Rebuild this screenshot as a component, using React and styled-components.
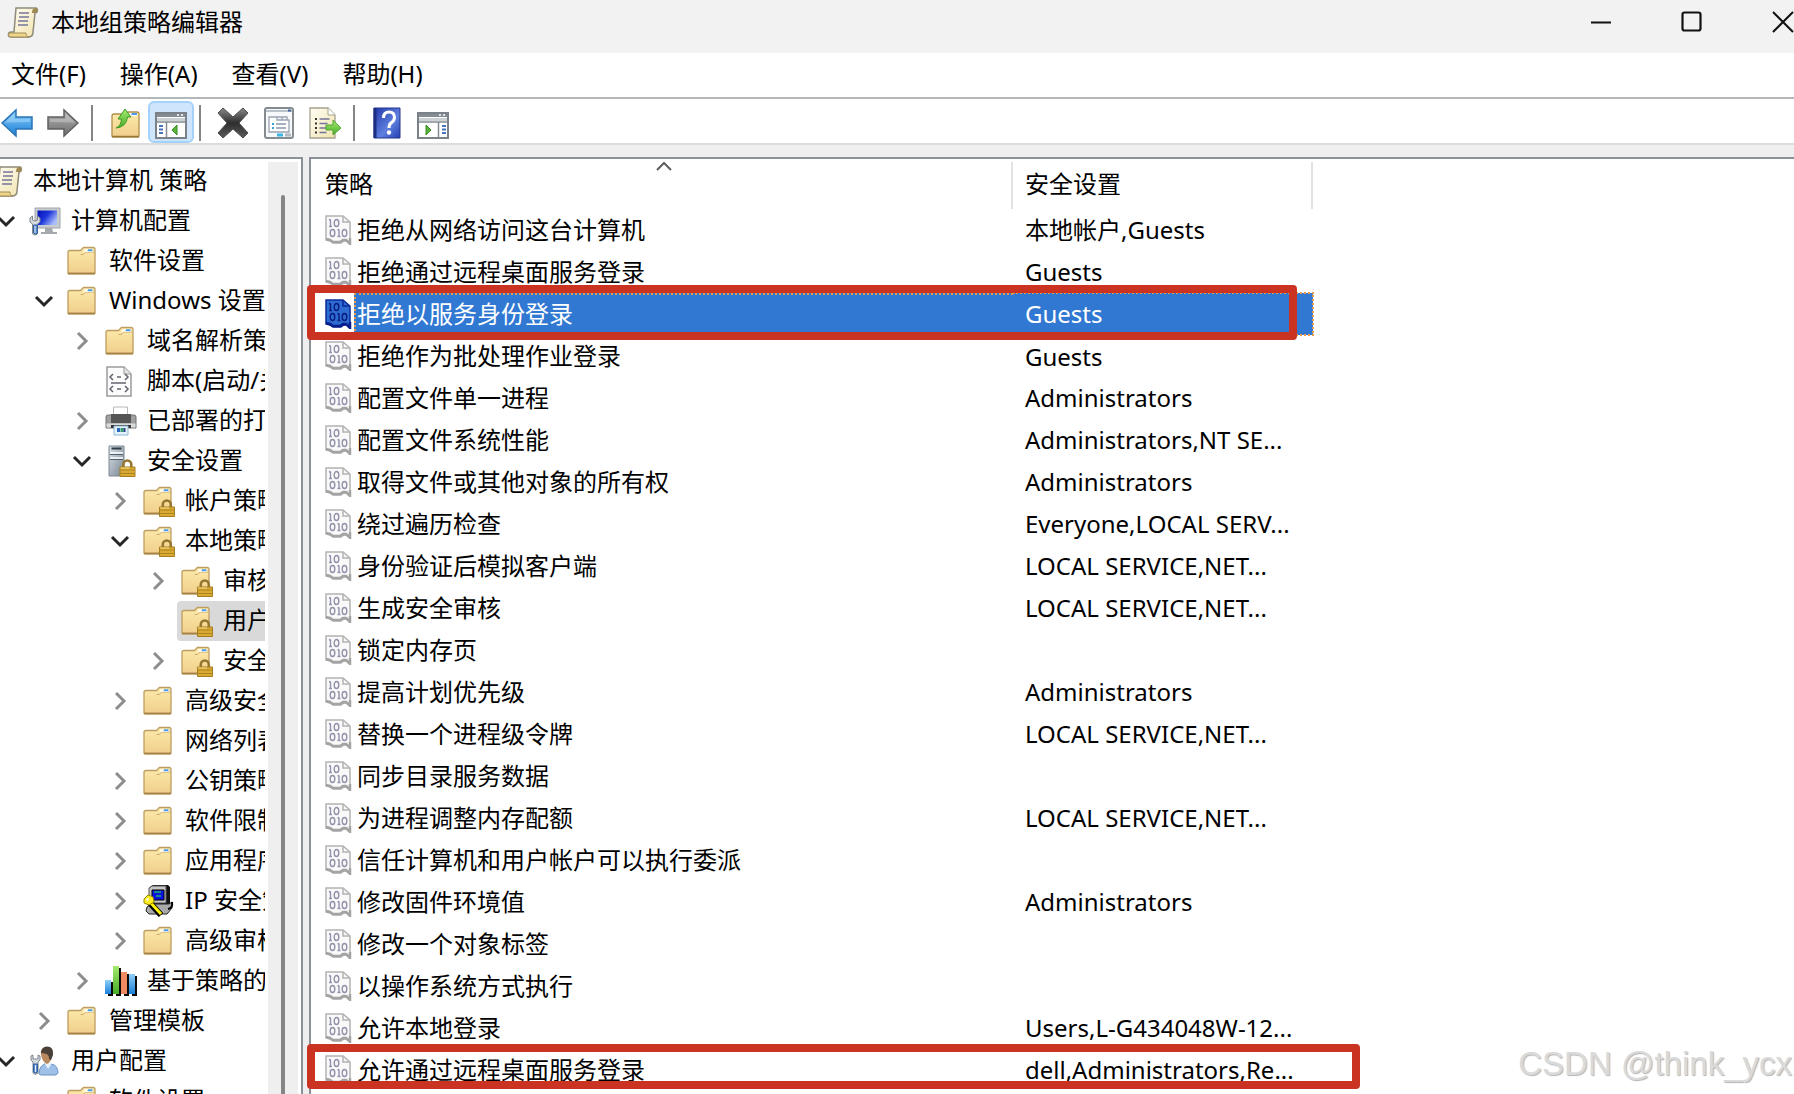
import { useState } from "react";
import styled, { createGlobalStyle, css } from "styled-components";

const GlobalStyle = createGlobalStyle`
  * {
    box-sizing: border-box;
  }
  body {
    margin: 0;
    background-color: #fff;
    color: #000;
    font-family: "Noto Sans", "Noto Sans CJK SC", sans-serif;
    font-size: 24px;
    line-height: 32px;
  }
  button {
    padding: 0;
    border: 0;
    background: none;
    color: inherit;
    font: inherit;
    text-align: left;
  }
`;

const Window = styled.div`
  position: relative;
  display: flex;
  flex-direction: column;
  height: 100vh;
  overflow: hidden;
`;

const TitleBar = styled.header`
  display: flex;
  align-items: center;
  justify-content: space-between;
  height: 53px;
  padding: 0 0 10px 7px;
  background-color: #f3f2f2;
`;

const Title = styled.h1`
  display: flex;
  align-items: center;
  gap: 12px;
  margin: 0;
  font-size: 24px;
  font-weight: 400;
`;

const WindowControls = styled.div`
  display: flex;
  margin-right: -34px;
`;

const ControlButton = styled.button`
  display: flex;
  align-items: center;
  justify-content: center;
  width: 91px;
  height: 42px;
`;

const MenuBar = styled.nav`
  display: flex;
  align-items: center;
  gap: 34px;
  height: 46px;
  padding: 0 0 2px 11px;
  border-bottom: 2px solid #b4b7ba;
`;

const ToolBar = styled.div`
  display: flex;
  align-items: flex-end;
  height: 46px;
  margin-left: -6px;
  border-bottom: 2px solid #dcdcdc;
`;

const ToolButton = styled.button`
  display: flex;
  align-items: center;
  justify-content: center;
  width: 46px;
  height: 42px;
  padding-top: 2px;
  border: 2px solid transparent;
  border-radius: 6px;
  ${({ $active }) =>
    $active &&
    css`
      border-color: #a5d2fb;
      background-color: #cfe5fb;
    `}
`;

const ToolDivider = styled.span`
  width: 2px;
  height: 36px;
  margin: 0 9px 2px 5px;
  background-color: #858585;
`;

const Main = styled.main`
  display: flex;
  flex: 1;
  gap: 6px;
  min-height: 0;
  padding-top: 12px;
  background-color: #efefef;
`;

const TreePane = styled.aside`
  display: flex;
  flex: none;
  gap: 3px;
  width: 303px;
  padding: 2px 3px 0 0;
  border: solid #8b9199;
  border-width: 2px 2px 0 0;
  background-color: #fff;
`;

const TreeClip = styled.div`
  flex: 1;
  overflow: hidden;
`;

const Tree = styled.ul`
  margin: 0 0 0 -42px;
  padding: 0;
  list-style: none;
`;

const TreeItem = styled.li`
  display: flex;
  align-items: center;
  height: 40px;
  padding-left: ${({ $level }) => $level * 38}px;
  white-space: nowrap;
`;

const Twisty = styled.button`
  display: flex;
  flex: none;
  align-items: center;
  justify-content: center;
  width: 20px;
  height: 40px;
  margin-right: 9px;
`;

const TwistySpace = styled.span`
  flex: none;
  width: 20px;
  margin-right: 9px;
`;

const NodeButton = styled.button`
  display: flex;
  flex: 1 0 auto;
  align-items: center;
  gap: 10px;
  height: 40px;
  padding-left: 4px;
  border-radius: 4px;
  background-color: ${({ $selected }) => ($selected ? "#d9d9d9" : "transparent")};
`;

const NodeLabel = styled.span`
  padding-bottom: 2px;
`;

const ScrollTrack = styled.div`
  display: flex;
  justify-content: center;
  width: 30px;
  margin-top: 1px;
  padding-top: 33px;
  background-color: #efefef;
`;

const ScrollThumb = styled.div`
  width: 4px;
  border-radius: 2px 2px 0 0;
  background-color: #858585;
`;

const ListPane = styled.section`
  flex: 1;
  min-width: 0;
  border: solid #8b9199;
  border-width: 2px 0 0 2px;
  background-color: #fff;
`;

const PolicyTable = styled.table`
  width: 100%;
  border-collapse: collapse;
  table-layout: fixed;
`;

const HeadCell = styled.th`
  position: relative;
  width: ${({ $width }) => $width};
  height: 50px;
  padding: 0 0 0 ${({ $indent }) => $indent};
  font-weight: 400;
  text-align: left;
  background: linear-gradient(#e2e2e2, #e2e2e2) right 3px / 2px 47px no-repeat;
`;

const SortMark = styled.svg`
  position: absolute;
  top: 2px;
  left: 50%;
  margin-left: -6px;
`;

const PolicyRow = styled.tr`
  height: 42px;
  white-space: nowrap;
`;

const NameCell = styled.td`
  position: relative;
  padding: 0;
`;

const NameContent = styled.div`
  display: flex;
  align-items: center;
  height: 42px;
  padding-left: 14px;
`;

const focusDots = "2px dotted #e39a4c";

const PolicyName = styled.span`
  flex: 1;
  height: 42px;
  margin-left: 2px;
  padding-left: 3px;
  line-height: 42px;
  ${({ $selected }) =>
    $selected &&
    css`
      padding-left: 1px;
      border: ${focusDots};
      border-right: 0;
      background-color: #3078d2;
      color: #fff;
      line-height: 38px;
    `}
`;

const SettingCell = styled.td`
  padding: 0 0 0 12px;
  ${({ $selected }) =>
    $selected &&
    css`
      border: ${focusDots};
      border-left: 0;
      background-color: #3078d2;
      color: #fff;
    `}
`;

const Highlight = styled.span`
  position: absolute;
  top: ${({ $top }) => $top}px;
  left: -4px;
  z-index: 1;
  width: ${({ $width }) => $width}px;
  height: ${({ $height }) => $height}px;
  border: 8px solid #ca3222;
  border-radius: 4px;
  pointer-events: none;
`;

const Watermark = styled.span`
  position: absolute;
  right: 2px;
  bottom: 12px;
  color: #dadada;
  font-family: "Liberation Sans", sans-serif;
  font-size: 33px;
  line-height: 36px;
  text-shadow: 1px 1px 1px #b4b4b4;
`;

/* icons */

const Gradients = () => (
  <svg width="0" height="0" style={{ position: "absolute" }} aria-hidden="true">
    <defs>
      <linearGradient id="folder" x1="0" y1="0" x2="0" y2="1">
        <stop offset="0" stopColor="#fdeaac" />
        <stop offset="1" stopColor="#f0ce8a" />
      </linearGradient>
      <linearGradient id="blue" x1="0" y1="0" x2="0" y2="1">
        <stop offset="0" stopColor="#8fd0fa" />
        <stop offset="1" stopColor="#1a7fd8" />
      </linearGradient>
      <linearGradient id="gray" x1="0" y1="0" x2="0" y2="1">
        <stop offset="0" stopColor="#b5b5b5" />
        <stop offset="1" stopColor="#6c6c6c" />
      </linearGradient>
      <linearGradient id="dark" x1="0" y1="0" x2="0" y2="1">
        <stop offset="0" stopColor="#8a8a8a" />
        <stop offset="0.5" stopColor="#2e2e2e" />
        <stop offset="1" stopColor="#5c5c5c" />
      </linearGradient>
      <linearGradient id="paper" x1="0" y1="0" x2="1" y2="1">
        <stop offset="0" stopColor="#fffef5" />
        <stop offset="1" stopColor="#f1e3ae" />
      </linearGradient>
      <linearGradient id="screen" x1="0" y1="0" x2="1" y2="0.6">
        <stop offset="0" stopColor="#0611b4" />
        <stop offset="0.5" stopColor="#1c34dc" />
        <stop offset="1" stopColor="#a9bdf8" />
      </linearGradient>
      <linearGradient id="help" x1="0" y1="0" x2="1" y2="1">
        <stop offset="0" stopColor="#2338a8" />
        <stop offset="0.6" stopColor="#5f80e0" />
        <stop offset="1" stopColor="#2340b0" />
      </linearGradient>
      <linearGradient id="steel" x1="0" y1="0" x2="1" y2="1">
        <stop offset="0" stopColor="#dbe3ea" />
        <stop offset="1" stopColor="#76838f" />
      </linearGradient>
      <linearGradient id="green" x1="0" y1="0" x2="0" y2="1">
        <stop offset="0" stopColor="#a5ea70" />
        <stop offset="1" stopColor="#47ad28" />
      </linearGradient>
    </defs>
  </svg>
);

const Icon = ({ size = 32, children }) => (
  <svg width={size} height={size} viewBox="0 0 32 32" fill="none" aria-hidden="true">
    {children}
  </svg>
);

const ScrollIcon = () => (
  <Icon>
    <path d="M9 2h20c2 0 2 5-1 5l-2 19c0 3-2 5-5 5H4c-4 0-3-5 0-5h3z" fill="url(#paper)" stroke="#8f8a7a" strokeWidth="1.5" />
    <path d="M25 7c0-3 1-5 4-5 2 0 2 5-1 5z" fill="#a28b50" />
    <path d="M2 27h17c0 2 1 4 3 4H4c-2 0-3-2-2-4z" fill="#efd68a" stroke="#a08d57" />
    <path d="M12 7h10M12 11h10M11 15h10M11 19h10" stroke="#75759c" strokeWidth="1.6" />
  </Icon>
);

const FolderShape = () => (
  <>
    <path d="M1 7.500q0-2 2-2h10.500l3-3H26q2 0 2 2V28q0 1-1 1H2q-1 0-1-1z" fill="url(#folder)" stroke="#bd9d60" strokeWidth="1.3" />
    <path d="M13.500 9.500h2.500l3-2.500h8" stroke="#d0ac67" />
    <path d="M17.500 4h8.500v3h-7.500l-2 1z" fill="#fffbe9" />
    <path d="M21 4.200h4.500v2h-5z" fill="#4b9bea" />
    <path d="M1 28.300h27" stroke="#a3834a" strokeWidth="1.5" />
  </>
);

const FolderIcon = () => (
  <Icon>
    <FolderShape />
  </Icon>
);

const Lock = () => (
  <>
    <path d="M19.800 23v-3.500a4 4 0 0 1 8 0V23" stroke="#94762f" strokeWidth="2.600" />
    <path d="M16.500 22h15v9.500h-15z" fill="#d9a936" stroke="#a67e20" />
    <path d="M17 25h14M17 28.500h14" stroke="#b1831d" strokeWidth="1.2" />
    <path d="M17 23h9" stroke="#f5da86" />
  </>
);

const LockedFolderIcon = () => (
  <Icon>
    <FolderShape />
    <Lock />
  </Icon>
);

const ComputerIcon = () => (
  <Icon>
    <path d="M6 3h25v20H6z" fill="#c9cccf" stroke="#a0a4a8" />
    <path d="M8.500 5.500h19.500v14.500H8.500z" fill="url(#screen)" />
    <path d="M16 23h7l1 4h4v2H12v-2h4z" fill="#a5a9ad" />
    <path d="M1 13v4l2.500 2v9q0 2 2.500 2t2.500-2v-9l2.500-2v-4l-2.500-2v4l-2.500 1-2.500-1v-4z" fill="#d6dade" stroke="#7e868e" />
    <path d="M4.500 20h4v8q-2 2-4 0z" fill="#5c8bcb" stroke="#335f9d" />
    <path d="M6 21v7" stroke="#e3f0fd" />
  </Icon>
);

const ScriptIcon = () => (
  <Icon>
    <path d="M2 2h17l7 7v22H2z" fill="#fcfcfc" stroke="#9a9a9a" strokeWidth="1.5" />
    <path d="M19 2v7h7" fill="#e5e5e5" stroke="#9a9a9a" />
    <path d="M8 9l-3 3 3 3M12 12h4M20 9l3 3-3 3M6 18h15M8 21l-3 3 3 3M12 24h4M20 21l3 3-3 3" stroke="#63636f" strokeWidth="1.500" />
  </Icon>
);

const PrinterIcon = () => (
  <Icon>
    <path d="M8.500 2h14v9h-14z" fill="#fff" stroke="#b5b8bb" />
    <path d="M1 12q0-2 2-2h26q2 0 2 2v11H1z" fill="#a0a0a0" stroke="#727272" />
    <path d="M6 9h20v9H6z" fill="#555" />
    <path d="M1.500 18.500h29v4h-29z" fill="#d8dadc" />
    <path d="M6 20h20v3H6z" fill="#333" />
    <path d="M9 21h14v9H9z" fill="#e5f2fb" stroke="#8eb5d2" />
    <path d="M12 23h3v4h-3z" fill="#2c66bd" />
    <path d="M15.500 23h3v4h-3z" fill="#2e9a6a" />
    <path d="M18.500 23h2v4h-2z" fill="#2a4086" />
  </Icon>
);

const ServerIcon = () => (
  <Icon>
    <path d="M4 1h15v30H4z" fill="url(#steel)" stroke="#7d8994" />
    <path d="M6.500 2.500h10v2h-10z" fill="#2f3c42" />
    <path d="M5 8h13M5 13h13" stroke="#fff" strokeWidth="1.5" />
    <path d="M5 9.500h13M5 14.500h13" stroke="#51606c" />
    <g transform="translate(-1.500 0)">
      <Lock />
    </g>
  </Icon>
);

const IpIcon = () => (
  <Icon>
    <path d="M7 2l3-2h15l2 2v18l-3 2H9z" fill="#111" />
    <path d="M6 3l3-2h14v17H6z" fill="#c5c5c5" stroke="#555" />
    <path d="M9 5h12v10H9z" fill="#0b12e0" stroke="#000" />
    <path d="M11 7h7M13 11h5" stroke="#138a8a" strokeWidth="2" />
    <path d="M4 22l5-3h17l3-2v6l-5 6H6l-3-3z" fill="#a9a9a9" stroke="#222" />
    <path d="M25 24q5-1 4-7" stroke="#000" strokeWidth="2" />
    <path d="M6 17l12 13" stroke="#000" strokeWidth="6" />
    <path d="M6 16l12 13" stroke="#fff200" strokeWidth="3" />
    <path d="M1 14l4-4 5 2 1 5-5 3-5-2z" fill="#ffed1f" stroke="#968b00" />
    <circle cx="4.500" cy="14.500" r="1.300" fill="#fff" />
  </Icon>
);

const ChartIcon = () => (
  <Icon>
    <path d="M3 17h5v14H3zM11 3h5v28h-5zM19 9h5v22h-5zM27 11h5v20h-5z" fill="#0a0a0a" />
    <path d="M0 15h6v14H0z" fill="url(#blue)" />
    <path d="M8 1h6v28H8z" fill="url(#green)" />
    <path d="M16 7h6v22h-6z" fill="#f08a60" />
    <path d="M24 9h6v20h-6z" fill="url(#blue)" />
  </Icon>
);

const UserIcon = () => (
  <Icon>
    <path d="M10 29q0-9 8-11l4 1q7 1 7 9l-2 2H12z" fill="#9fc1e8" stroke="#6b92c3" />
    <path d="M15 17l4 7 4-6z" fill="#e8f2fc" />
    <path d="M12 10q-1-8 6-8 6 0 5 8-1 8-5 9-4-1-6-9z" fill="#b98a5e" />
    <path d="M12 8q0-6 6-6.500 7 0 6 8.500l-2 5-2-1q1-6-8-6z" fill="#4a4038" />
    <path d="M2 11v4l2 2v11q2 3 5 0V17l2-2v-4l-2-1v4H4v-4z" fill="#d6dade" stroke="#7e868e" />
    <path d="M4.500 19h4v8q-2 2-4 0z" fill="#5c8bcb" stroke="#335f9d" />
    <path d="M6.500 20v7" stroke="#e3f0fd" />
  </Icon>
);

const BinaryIcon = ({ selected }) => {
  const line = selected ? "#0c2a96" : "#b2b2b2";
  const ink = selected ? "#0a1c7c" : "#9292ac";
  return (
    <svg width="27" height="30" viewBox="0 0 27 30" fill="none" aria-hidden="true">
      <path d="M1 1h17l7 6v20.500l-3-2-4 1-2 1.500H8l-3-2-4-1z" fill={selected ? "#2b6bd2" : "#f9f9f9"} stroke={line} strokeWidth="1.500" />
      <path d="M1 24l4 1 3 2h7l3-2h3l4 4V23" stroke={selected ? "#071d8c" : "#a3a3a3"} strokeWidth="2.500" />
      <path d="M18 1v6h7" stroke={line} strokeWidth="1.500" />
      <path d="M5.500 4.500v7M4 5l1.500-.5M4 11.500h3M14 14.500v7M12.500 15l1.500-.5M12.500 21.500h3" stroke={ink} strokeWidth="1.400" />
      <ellipse cx="11.500" cy="8" rx="2.300" ry="3.500" stroke={ink} strokeWidth="1.400" />
      <ellipse cx="7.500" cy="18" rx="2.300" ry="3.500" stroke={ink} strokeWidth="1.400" />
      <ellipse cx="19.500" cy="18" rx="2.300" ry="3.500" stroke={ink} strokeWidth="1.400" />
    </svg>
  );
};

const BackIcon = () => (
  <Icon>
    <path d="M1 16L15 3v7h16v12H15v7z" fill="url(#blue)" stroke="#2b73b5" strokeWidth="1.500" />
    <path d="M4 15.500l9.500-9V12H29v3z" fill="#a9dcfb" opacity="0.500" />
  </Icon>
);

const ForwardIcon = () => (
  <Icon>
    <path d="M31 16L17 3v7H1v12h16v7z" fill="url(#gray)" stroke="#606060" strokeWidth="1.500" />
    <path d="M28 15.500l-9.500-9V12H3v3z" fill="#dadada" opacity="0.400" />
  </Icon>
);

const UpFolderIcon = () => (
  <Icon>
    <path d="M3 9q0-2 2-2h11l3-2h9q2 0 2 2v22q0 1-1 1H4q-1 0-1-1z" fill="url(#folder)" stroke="#b08f4c" strokeWidth="1.300" />
    <path d="M19 6h9v3H17z" fill="#fff" />
    <path d="M23 6h5v2h-6z" fill="#4b9bea" />
    <path d="M3 29.500h27" stroke="#987737" strokeWidth="1.500" />
    <path d="M7 21q5-2 5.500-9H9l7-10 6 8h-3.500q-1 10-11.500 11z" fill="url(#green)" stroke="#3d9b25" />
  </Icon>
);

const PaneIcon = ({ right }) => (
  <Icon>
    <g transform="translate(0 2)">
      <path d="M1 4h30v25H1z" fill="#fff" stroke="#7a8188" strokeWidth="2" />
      <path d="M2 5h28v3H2z" fill="#858c94" />
      <path d="M22 6h2M26 6h2" stroke="#fff" strokeWidth="1.500" />
      <path d="M2 10.500h28" stroke="#ccd1d6" strokeWidth="3" />
      <path d="M2 13h28" stroke="#848b92" strokeWidth="1.500" />
      {right ? (
        <>
          <path d="M21.500 13v16" stroke="#848b92" strokeWidth="1.500" />
          <path d="M25 17h4M25 20.500h4M25 24h4" stroke="#4774bc" strokeWidth="2" />
          <path d="M9 16v10l5-5z" fill="#58b33a" stroke="#398d20" />
        </>
      ) : (
        <>
          <path d="M11.500 13v16" stroke="#848b92" strokeWidth="1.500" />
          <path d="M4 17h4M4 20.500h4M4 24h4" stroke="#4774bc" strokeWidth="2" />
          <path d="M22 16v10l-5-5z" fill="#58b33a" stroke="#398d20" />
        </>
      )}
    </g>
  </Icon>
);

const DeleteIcon = () => (
  <Icon>
    <path d="M1 6l5-5 10 9L26 1l5 5-9 10 9 10-5 5-10-9-10 9-5-5 9-10z" fill="url(#dark)" stroke="#4e4e4e" strokeLinejoin="round" />
  </Icon>
);

const PropertiesIcon = () => (
  <Icon>
    <path d="M2 3q0-2 2-2h24q2 0 2 2v26q0 2-2 2H4q-2 0-2-2z" fill="#f7f8f9" stroke="#868b90" strokeWidth="2" />
    <path d="M3 4h26" stroke="#b9c2cc" strokeWidth="2" />
    <path d="M25 3.500h3" stroke="#3d5b9c" strokeWidth="2" />
    <path d="M6 10h8v3h12v12H6z" fill="#fff" stroke="#9ba4b2" strokeWidth="1.300" />
    <path d="M14 10h5v3M19 10h5v3" stroke="#9ba4b2" strokeWidth="1.300" />
    <path d="M9 17h2M9 21h2" stroke="#37a3d8" strokeWidth="2" />
    <path d="M13 17h10M13 21h10" stroke="#8c96a8" strokeWidth="1.500" />
    <path d="M14 28h6" stroke="#38b6e8" strokeWidth="3" />
    <path d="M22 28h6" stroke="#b3b9c0" strokeWidth="3" />
  </Icon>
);

const ExportIcon = () => (
  <Icon>
    <path d="M1 1h18l7 7v23H1z" fill="url(#paper)" stroke="#a5a18f" strokeWidth="1.300" />
    <path d="M19 1v7h7" fill="#fff" stroke="#a5a18f" />
    <path d="M6 12h2M6 16.500h2M6 21h2M6 25.500h2" stroke="#333" strokeWidth="2" />
    <path d="M10.500 12h10M10.500 16.500h8M10.500 21h8M10.500 25.500h7" stroke="#7474a0" strokeWidth="1.600" />
    <path d="M17 18h7v-5l8 8-8 7v-5h-7z" fill="url(#green)" stroke="#51a635" />
  </Icon>
);

const HelpIcon = () => (
  <Icon>
    <path d="M3 1h26v30H3z" fill="url(#help)" stroke="#24368e" />
    <path d="M4 1v30" stroke="#1d2d80" strokeWidth="3" />
    <path d="M12.500 11q0-6 5.500-6t5.500 5.500q0 3-3.500 5.500-2 1.500-2 5" stroke="#fff" strokeWidth="3" />
    <circle cx="18" cy="25.500" r="2.200" fill="#fff" />
  </Icon>
);

const Chevron = ({ open }) => (
  <svg width="20" height="20" viewBox="0 0 20 20" fill="none" aria-hidden="true">
    {open ? (
      <path d="M2 6l8 8 8-8" stroke="#262626" strokeWidth="3" />
    ) : (
      <path d="M6 2l8 8-8 8" stroke="#8d8d8d" strokeWidth="3" />
    )}
  </svg>
);

/* data */

const menus = ["文件(F)", "操作(A)", "查看(V)", "帮助(H)"];

const tools = [
  { label: "后退", icon: <BackIcon /> },
  { label: "前进", icon: <ForwardIcon /> },
  null,
  { label: "上一级", icon: <UpFolderIcon /> },
  { label: "显示/隐藏控制台树", icon: <PaneIcon />, active: true },
  null,
  { label: "删除", icon: <DeleteIcon /> },
  { label: "属性", icon: <PropertiesIcon /> },
  { label: "导出列表", icon: <ExportIcon /> },
  null,
  { label: "帮助", icon: <HelpIcon /> },
  { label: "显示/隐藏操作窗格", icon: <PaneIcon right /> },
];

const treeNodes = [
  { level: 0, text: "本地计算机 策略", icon: <ScrollIcon /> },
  { level: 1, text: "计算机配置", icon: <ComputerIcon />, open: true },
  { level: 2, text: "软件设置", icon: <FolderIcon /> },
  { level: 2, text: "Windows 设置", icon: <FolderIcon />, open: true },
  { level: 3, text: "域名解析策略", icon: <FolderIcon />, open: false },
  { level: 3, text: "脚本(启动/关机)", icon: <ScriptIcon /> },
  { level: 3, text: "已部署的打印机", icon: <PrinterIcon />, open: false },
  { level: 3, text: "安全设置", icon: <ServerIcon />, open: true },
  { level: 4, text: "帐户策略", icon: <LockedFolderIcon />, open: false },
  { level: 4, text: "本地策略", icon: <LockedFolderIcon />, open: true },
  { level: 5, text: "审核策略", icon: <LockedFolderIcon />, open: false },
  { level: 5, text: "用户权限分配", icon: <LockedFolderIcon /> },
  { level: 5, text: "安全选项", icon: <LockedFolderIcon />, open: false },
  { level: 4, text: "高级安全 Windows Defender 防火墙", icon: <FolderIcon />, open: false },
  { level: 4, text: "网络列表管理器策略", icon: <FolderIcon /> },
  { level: 4, text: "公钥策略", icon: <FolderIcon />, open: false },
  { level: 4, text: "软件限制策略", icon: <FolderIcon />, open: false },
  { level: 4, text: "应用程序控制策略", icon: <FolderIcon />, open: false },
  { level: 4, text: "IP 安全策略", icon: <IpIcon />, open: false },
  { level: 4, text: "高级审核策略配置", icon: <FolderIcon />, open: false },
  { level: 3, text: "基于策略的 QoS", icon: <ChartIcon />, open: false },
  { level: 2, text: "管理模板", icon: <FolderIcon />, open: false },
  { level: 1, text: "用户配置", icon: <UserIcon />, open: true },
  { level: 2, text: "软件设置", icon: <FolderIcon /> },
];

const policies = [
  { name: "拒绝从网络访问这台计算机", setting: "本地帐户,Guests" },
  { name: "拒绝通过远程桌面服务登录", setting: "Guests" },
  { name: "拒绝以服务身份登录", setting: "Guests", mark: { $top: -8, $width: 990, $height: 55 } },
  { name: "拒绝作为批处理作业登录", setting: "Guests" },
  { name: "配置文件单一进程", setting: "Administrators" },
  { name: "配置文件系统性能", setting: "Administrators,NT SE..." },
  { name: "取得文件或其他对象的所有权", setting: "Administrators" },
  { name: "绕过遍历检查", setting: "Everyone,LOCAL SERV..." },
  { name: "身份验证后模拟客户端", setting: "LOCAL SERVICE,NET..." },
  { name: "生成安全审核", setting: "LOCAL SERVICE,NET..." },
  { name: "锁定内存页", setting: "" },
  { name: "提高计划优先级", setting: "Administrators" },
  { name: "替换一个进程级令牌", setting: "LOCAL SERVICE,NET..." },
  { name: "同步目录服务数据", setting: "" },
  { name: "为进程调整内存配额", setting: "LOCAL SERVICE,NET..." },
  { name: "信任计算机和用户帐户可以执行委派", setting: "" },
  { name: "修改固件环境值", setting: "Administrators" },
  { name: "修改一个对象标签", setting: "" },
  { name: "以操作系统方式执行", setting: "" },
  { name: "允许本地登录", setting: "Users,L-G434048W-12..." },
  { name: "允许通过远程桌面服务登录", setting: "dell,Administrators,Re...", mark: { $top: -5, $width: 1053, $height: 45 } },
];

export default function App() {
  const [node, setNode] = useState(11);
  const [row, setRow] = useState(2);

  return (
    <Window>
      <GlobalStyle />
      <Gradients />
      <TitleBar>
        <Title>
          <ScrollIcon />
          本地组策略编辑器
        </Title>
        <WindowControls>
          <ControlButton aria-label="最小化">
            <svg width="22" height="22" viewBox="0 0 22 22" fill="none">
              <path d="M1 11.500h20" stroke="#111" strokeWidth="2" />
            </svg>
          </ControlButton>
          <ControlButton aria-label="最大化">
            <svg width="22" height="22" viewBox="0 0 22 22" fill="none">
              <rect x="1.500" y="1.500" width="18" height="18" rx="2" stroke="#111" strokeWidth="2.200" />
            </svg>
          </ControlButton>
          <ControlButton aria-label="关闭">
            <svg width="22" height="22" viewBox="0 0 22 22" fill="none">
              <path d="M1 1l20 20M21 1L1 21" stroke="#111" strokeWidth="2" />
            </svg>
          </ControlButton>
        </WindowControls>
      </TitleBar>

      <MenuBar>
        {menus.map((menu) => (
          <button key={menu}>{menu}</button>
        ))}
      </MenuBar>

      <ToolBar role="toolbar">
        {tools.map((tool, i) =>
          tool ? (
            <ToolButton key={i} aria-label={tool.label} $active={tool.active}>
              {tool.icon}
            </ToolButton>
          ) : (
            <ToolDivider key={i} />
          )
        )}
      </ToolBar>

      <Main>
        <TreePane>
          <TreeClip>
            <Tree>
              {treeNodes.map(({ level, text, icon, open }, i) => (
                <TreeItem key={i} $level={level}>
                  {open === undefined ? (
                    <TwistySpace />
                  ) : (
                    <Twisty aria-label={text} aria-expanded={open}>
                      <Chevron open={open} />
                    </Twisty>
                  )}
                  <NodeButton $selected={i === node} onClick={() => setNode(i)}>
                    {icon}
                    <NodeLabel>{text}</NodeLabel>
                  </NodeButton>
                </TreeItem>
              ))}
            </Tree>
          </TreeClip>
          <ScrollTrack>
            <ScrollThumb />
          </ScrollTrack>
        </TreePane>

        <ListPane>
          <PolicyTable>
            <thead>
              <tr>
                <HeadCell $width="702px" $indent="14px">
                  <button>策略</button>
                  <SortMark width="16" height="10" viewBox="0 0 16 10" fill="none">
                    <path d="M1 9l7-7 7 7" stroke="#5f5f5f" strokeWidth="2" />
                  </SortMark>
                </HeadCell>
                <HeadCell $width="300px" $indent="12px">
                  <button>安全设置</button>
                </HeadCell>
                <td />
              </tr>
            </thead>
            <tbody>
              {policies.map(({ name, setting, mark }, i) => (
                <PolicyRow key={name} onClick={() => setRow(i)}>
                  <NameCell>
                    <NameContent>
                      <BinaryIcon selected={i === row} />
                      <PolicyName $selected={i === row}>{name}</PolicyName>
                    </NameContent>
                    {mark && <Highlight {...mark} />}
                  </NameCell>
                  <SettingCell $selected={i === row}>{setting}</SettingCell>
                  <td />
                </PolicyRow>
              ))}
            </tbody>
          </PolicyTable>
        </ListPane>
      </Main>
      <Watermark>CSDN @think_ycx</Watermark>
    </Window>
  );
}
